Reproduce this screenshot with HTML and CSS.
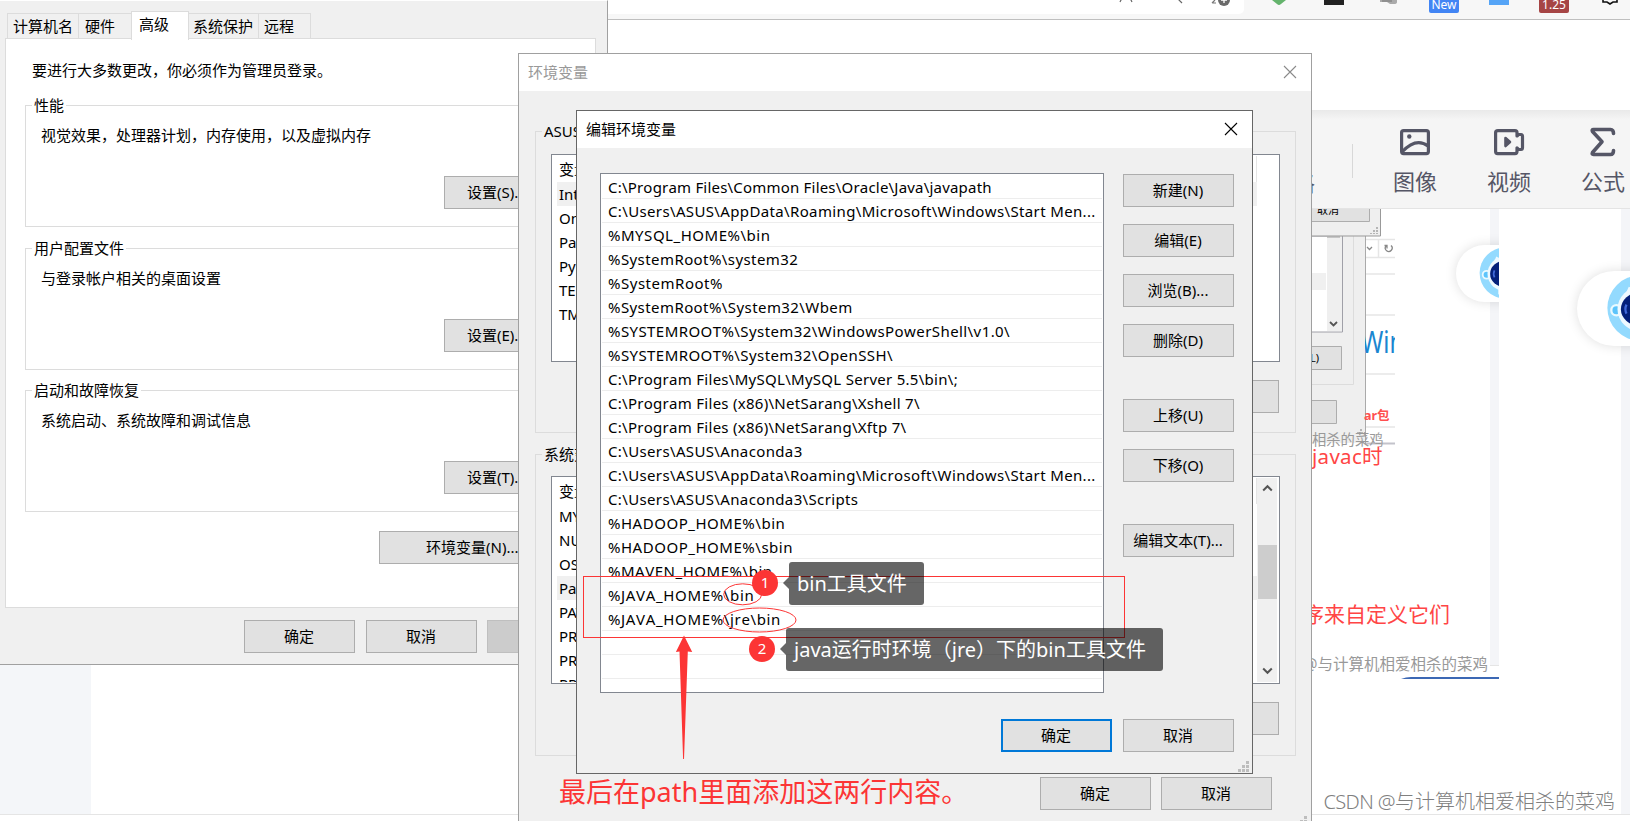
FILE: index.html
```
<!DOCTYPE html>
<html lang="zh-CN">
<head>
    <meta charset="UTF-8">
    <title>环境变量</title>
    <link rel="stylesheet" href="styles.css">
</head>
<body>
    <div class="desktop">

        <!-- Browser behind the dialogs -->
        <div class="browser">
            <div class="browser-bar">
                <div class="address"></div>
                <svg class="bar-icons" width="540" height="19" viewBox="1090 0 540 19">
                    <path d="M1120 2l2-4M1132 2l-2-4M1178-1l4 4" fill="none" stroke="#666" stroke-width="1.2"/>
                    <path d="M1212 3l3-3M1212 3h4" fill="none" stroke="#777" stroke-width="1.2"/>
                    <circle cx="1224" cy="0" r="6" fill="#6a6a6a"/>
                    <path d="M1221 0h6M1224-2v5" stroke="#fff" stroke-width="1.3"/>
                    <path d="M1272 0h14l-5 4q-2 2-4 0z" fill="#64b36c"/>
                    <rect x="1324" y="0" width="20" height="5" fill="#222"/>
                    <path d="M1380 0h17v2q0 2-3 2h-4l-3-2h-7z" fill="#aaa"/>
                    <path d="M1382 1h10" stroke="#777"/>
                    <rect x="1489" y="0" width="20" height="5" fill="#55a4f6"/>
                    <path d="M1603 0v2h4l3 2 3-2h4v-3" fill="none" stroke="#111" stroke-width="1.6"/>
                </svg>
                <span class="badge badge-new">New</span>
                <span class="badge badge-rate">1.25</span>
            </div>
            <div class="page-head"></div>
            <div class="editor-bar">
                <span class="cut-label">格</span>
                <i class="bar-divider"></i>
                <div class="tool tool-image">
                    <svg width="32" height="32" viewBox="0 0 32 32" fill="none" stroke="#555666" stroke-width="3.2" stroke-linejoin="round">
                        <rect x="2.6" y="4.6" width="26.8" height="23" rx="2"/>
                        <circle cx="10.3" cy="10.5" r="2.2" fill="#555666" stroke="none"/>
                        <path d="M3 26Q17 11 29 20"/>
                    </svg>
                    <span>图像</span>
                </div>
                <div class="tool tool-video">
                    <svg width="32" height="32" viewBox="0 0 32 32" fill="none" stroke="#555666" stroke-width="3.2" stroke-linejoin="round">
                        <path d="M5 4.6h17q2 0 2 2V10l1.500-1.500h2.500q1.500 0 1.500 2v11q0 2-1.500 2h-2.500L24 22v3.600q0 2-2 2H4.600q-2 0-2-2v-19q0-2 2.400-2z"/>
                        <path d="M12.500 12l4.500 4-4.500 4z" fill="#555666" stroke-width="2.600"/>
                    </svg>
                    <span>视频</span>
                </div>
                <div class="tool tool-formula">
                    <svg width="32" height="32" viewBox="0 0 32 32" fill="none" stroke="#555666" stroke-width="3.6" stroke-linejoin="round" stroke-linecap="round">
                        <path d="M26.500 7.500q0-4-3-4H6.500q-2 0-1 2L15 15.800 5.500 26.500q-1 2 1 2h17q3 0 3-4"/>
                    </svg>
                    <span>公式</span>
                </div>
            </div>
            <div class="page-body">
                <div class="page-margin"></div>
                <div class="article"></div>
                <div class="page-gutter"></div>
            </div>

            <!-- Pictures already inserted in the article -->
            <div class="shot">
                <i class="shot-strip"></i>
                <svg class="shot-art" width="188" height="472" viewBox="1311 208 188 472">
                    <path d="M1366 239.500h29M1366 257.500h29M1366 274h29M1366 315h29M1366 374h29M1366 427h29M1378.500 240v17" fill="none" stroke="#e6e6e6" stroke-width="1.500"/>
                    <path d="M1366 443.500h29" stroke="#c3c3cb" stroke-width="2"/>
                    <path d="M1367 247l2.500 2.500 2.500-2.500" fill="none" stroke="#888" stroke-width="1.300"/>
                    <path d="M1386 246a3.400 3.400 0 1 0 5-.500M1384.500 245.500h2.500v3" fill="none" stroke="#888" stroke-width="1.300"/>
                    <rect x="1311" y="208" width="54.500" height="235" fill="#efefef"/>
                    <path d="M1365.500 236v208" stroke="#aaa"/>
                    <path d="M1353.500 236v148.500H1311" fill="none" stroke="#dcdcdc"/>
                    <path d="M1311 236h31.500v96H1311" fill="#fff" stroke="#a0a0a8"/>
                    <rect x="1327" y="236" width="15" height="95" fill="#efefef"/>
                    <rect x="1327" y="236" width="13" height="2" fill="#c6c6c6"/>
                    <rect x="1311" y="273" width="15" height="17" fill="#f0f0f0"/>
                    <path d="M1330 322l3.500 3.500 3.500-3.500" fill="none" stroke="#555" stroke-width="1.800"/>
                    <path d="M1300 346.500h41.500v23H1300zM1300 400.500h36.500v23H1300z" fill="#e1e1e1" stroke="#adadad"/>
                    <path d="M1300 208h80.500v28H1300z" fill="#efefef" stroke="#999"/>
                    <path d="M1300 206h69.500v15.500H1300z" fill="#e1e1e1" stroke="#adadad"/>
                    <path d="M1376 227h2v2h-2zM1373 230h2v2h-2zM1376 230h2v2h-2zM1370 233h2v1h-2zM1373 233h2v1h-2zM1376 233h2v1h-2zM1360 429h2v2h-2zM1357 432h6v2h-6z" fill="#b5b5b5"/>
                    <path d="M1490 665.500h9" stroke="#e5e5e5"/>
                    <path d="M1401 679q5-2 10-2h88v2z" fill="#3c68b4"/>
                </svg>
                <span class="shot-cancel">取消</span>
                <span class="shot-l">L)</span>
                <span class="shot-win"><b>Win</b></span>
                <span class="shot-jar">ar包</span>
                <span class="shot-mark1">相杀的菜鸡</span>
                <span class="shot-javac">javac时</span>
                <span class="shot-custom">序来自定义它们</span>
                <span class="shot-mark2">@与计算机相爱相杀的菜鸡</span>
                <div class="bubble bubble-small">
                    <svg width="56" height="56" viewBox="0 0 64 64"><use href="#robot"/></svg>
                </div>
            </div>
            <div class="bubble bubble-large">
                <svg width="72" height="72" viewBox="0 0 64 64">
                    <g id="robot">
                        <circle cx="32" cy="32" r="29" fill="#93dafe"/>
                        <path d="M24 50l8-4 6 14q-8 0-14-4z" fill="#d8f3ff"/>
                        <circle cx="11" cy="34" r="4.500" fill="#5cc4fb" stroke="#eafaff" stroke-width="2"/>
                        <ellipse cx="33" cy="33" rx="21" ry="20" fill="#eef9ff"/>
                        <path d="M19 20l3-7 7 4z" fill="#eef9ff"/>
                        <ellipse cx="32" cy="33" rx="17" ry="15" fill="#04207a"/>
                        <path d="M20 29q-2 4 0 8" fill="none" stroke="#4169d8" stroke-width="2"/>
                        <path d="M26 34q3-4 6 0" fill="none" stroke="#58b9ff" stroke-width="2"/>
                    </g>
                </svg>
            </div>
        </div>

        <!-- System properties -->
        <div class="window props">
            <div class="tabs">
                <span class="tab tab-name">计算机名</span>
                <span class="tab tab-hw">硬件</span>
                <span class="tab tab-adv active">高级</span>
                <span class="tab tab-protect">系统保护</span>
                <span class="tab tab-remote">远程</span>
            </div>
            <div class="panel">
                <p class="notice">要进行大多数更改，你必须作为管理员登录。</p>
                <div class="group setting">
                    <span class="group-title">性能</span>
                    <p>视觉效果，处理器计划，内存使用，以及虚拟内存</p>
                    <button class="btn">设置(S)...</button>
                </div>
                <div class="group setting">
                    <span class="group-title">用户配置文件</span>
                    <p>与登录帐户相关的桌面设置</p>
                    <button class="btn">设置(E)...</button>
                </div>
                <div class="group setting">
                    <span class="group-title">启动和故障恢复</span>
                    <p>系统启动、系统故障和调试信息</p>
                    <button class="btn">设置(T)...</button>
                </div>
                <button class="btn env-btn">环境变量(N)...</button>
            </div>
            <div class="props-actions">
                <button class="btn">确定</button>
                <button class="btn">取消</button>
                <button class="btn disabled">应用(A)</button>
            </div>
        </div>

        <!-- Environment variables -->
        <div class="window env">
            <div class="title-bar">
                <span>环境变量</span>
                <svg width="14" height="14" viewBox="0 0 14 14"><path d="M1 1l12 12M13 1L1 13" stroke="#8a8a8a" stroke-width="1.1"/></svg>
            </div>
            <div class="group vars vars-user">
                <span class="group-title">ASUS 的用户变量(U)</span>
                <div class="var-list">
                    <div class="rows">
                        <div class="head">变量</div>
                        <div class="selected">IntelliJ IDEA</div>
                        <div>OneDrive</div>
                        <div>Path</div>
                        <div>PyCharm</div>
                        <div>TEMP</div>
                        <div>TMP</div>
                    </div>
                </div>
                <button class="btn"></button>
            </div>
            <div class="group vars vars-system">
                <span class="group-title">系统变量(S)</span>
                <div class="var-list">
                    <div class="rows">
                        <div class="head">变量</div>
                        <div>MYSQL_HOME</div>
                        <div>NUMBER</div>
                        <div>OS</div>
                        <div class="selected">Path</div>
                        <div>PATHEXT</div>
                        <div>PROCESSOR</div>
                        <div>PROCESSOR</div>
                        <div>PROCESSOR</div>
                    </div>
                    <div class="scrollbar">
                        <svg width="11" height="8" viewBox="0 0 11 8"><path d="M1.200 6.500l4.300-4.300 4.300 4.300" fill="none" stroke="#555" stroke-width="2"/></svg>
                        <i class="thumb"></i>
                        <svg width="11" height="8" viewBox="0 0 11 8"><path d="M1.200 1.500l4.300 4.300 4.300-4.300" fill="none" stroke="#555" stroke-width="2"/></svg>
                    </div>
                </div>
                <button class="btn"></button>
            </div>
            <div class="env-actions">
                <button class="btn">确定</button>
                <button class="btn">取消</button>
            </div>
            <svg class="grip" width="12" height="12"><path d="M9 1h3v3H9zM9 5h3v3H9zM5 5h3v3H5zM9 9h3v3H9zM5 9h3v3H5zM1 9h3v3H1z" fill="#bdbdbd"/></svg>
        </div>

        <!-- Edit environment variable -->
        <div class="window edit">
            <div class="title-bar">
                <span>编辑环境变量</span>
                <svg width="14" height="14" viewBox="0 0 14 14"><path d="M1 1l12 12M13 1L1 13" stroke="#000" stroke-width="1.1"/></svg>
            </div>
            <div class="edit-body">
                <ul class="paths">
                    <li>C:\Program Files\Common Files\Oracle\Java\javapath</li>
                    <li class="long">C:\Users\ASUS\AppData\Roaming\Microsoft\Windows\Start Men...</li>
                    <li class="home">%MYSQL_HOME%\bin</li>
                    <li class="root">%SystemRoot%\system32</li>
                    <li class="home">%SystemRoot%</li>
                    <li class="root">%SystemRoot%\System32\Wbem</li>
                    <li class="root">%SYSTEMROOT%\System32\WindowsPowerShell\v1.0\</li>
                    <li class="root">%SYSTEMROOT%\System32\OpenSSH\</li>
                    <li>C:\Program Files\MySQL\MySQL Server 5.5\bin\;</li>
                    <li>C:\Program Files (x86)\NetSarang\Xshell 7\</li>
                    <li>C:\Program Files (x86)\NetSarang\Xftp 7\</li>
                    <li class="long">C:\Users\ASUS\Anaconda3</li>
                    <li class="long">C:\Users\ASUS\AppData\Roaming\Microsoft\Windows\Start Men...</li>
                    <li class="long">C:\Users\ASUS\Anaconda3\Scripts</li>
                    <li class="home">%HADOOP_HOME%\bin</li>
                    <li class="home">%HADOOP_HOME%\sbin</li>
                    <li class="home">%MAVEN_HOME%\bin</li>
                    <li class="java">%JAVA_HOME%\bin</li>
                    <li class="java">%JAVA_HOME%\jre\bin</li>
                    <li></li>
                    <li></li>
                </ul>
                <div class="side-buttons">
                    <button class="btn">新建(N)</button>
                    <button class="btn">编辑(E)</button>
                    <button class="btn">浏览(B)...</button>
                    <button class="btn">删除(D)</button>
                    <button class="btn spaced">上移(U)</button>
                    <button class="btn">下移(O)</button>
                    <button class="btn spaced">编辑文本(T)...</button>
                </div>
            </div>
            <div class="edit-actions">
                <button class="btn primary">确定</button>
                <button class="btn">取消</button>
            </div>
            <svg class="grip" width="12" height="12"><path d="M9 1h3v3H9zM9 5h3v3H9zM5 5h3v3H5zM9 9h3v3H9zM5 9h3v3H5zM1 9h3v3H1z" fill="#bdbdbd"/></svg>
        </div>

        <!-- Red marks and notes -->
        <svg class="marks" width="1630" height="821" fill="none" stroke="#fc3535">
            <rect x="583.500" y="576.500" width="541" height="61"/>
            <ellipse cx="742.700" cy="594.300" rx="19" ry="10.500"/>
            <ellipse cx="759.500" cy="620" rx="36.500" ry="12"/>
            <path d="M684 635.500l8.200 16.500-4.400-.5-3.800 107.500-.9 0-3.600-107.500-3.600.5z" fill="#fc3535" stroke="none"/>
        </svg>
        <span class="number number-1">1</span>
        <span class="number number-2">2</span>
        <div class="note note-1">bin工具文件</div>
        <div class="note note-2">java运行时环境（jre）下的bin工具文件</div>
        <div class="caption">最后在path里面添加这两行内容。</div>
        <div class="watermark"><span>CSDN @</span>与计算机相爱相杀的菜鸡</div>
    </div>
</body>
</html>
```

FILE: styles.css
```
:root {
    --face: #f0f0f0;
    --btn: #e1e1e1;
    --btn-border: #adadad;
    --group-border: #dcdcdc;
    --list-border: #828790;
    --red: #fc3535;
}

* {
    margin: 0;
    padding: 0;
    box-sizing: border-box;
}

body {
    font-family: "Noto Sans", "Noto Sans CJK SC", sans-serif;
    font-size: 15px;
    line-height: 20px;
    color: #000;
    background: #fff;
    overflow: hidden;
}

.desktop {
    position: relative;
    width: 1630px;
    height: 821px;
    overflow: hidden;
}

span,
.btn,
.note,
.caption,
.watermark {
    white-space: nowrap;
}

/* Browser */
.browser {
    position: absolute;
    inset: 0;
    display: flex;
    flex-direction: column;
}

.browser-bar {
    position: relative;
    height: 20px;
    background: #f7f7f7;
    border-bottom: 1px solid #bfbfbf;
}

.address {
    width: 1244px;
    height: 14px;
    background: #fff;
    border-radius: 0 0 5px 0;
}

.bar-icons {
    position: absolute;
    right: 0;
    top: 0;
}

.badge {
    position: absolute;
    top: -4px;
    width: 30px;
    height: 17px;
    border-radius: 2px;
    color: #fff;
    font-size: 12px;
    line-height: 18px;
    text-align: center;
}

.badge-new {
    left: 1429px;
    background: #4285f4;
}

.badge-rate {
    left: 1539px;
    background: #a64545;
}

.page-head {
    height: 90px;
}

.editor-bar {
    position: relative;
    display: flex;
    height: 99px;
    padding-left: 1301px;
    background: linear-gradient(#e9e9e9, #f5f5f5 10px);
    border-bottom: 1px solid #e4e4e4;
    color: #555666;
    font-size: 22px;
    line-height: 30px;
}

.cut-label {
    display: flex;
    justify-content: flex-end;
    width: 14px;
    margin-top: 57px;
}

.bar-divider {
    width: 1px;
    height: 34px;
    margin: 34px 0 0 37px;
    background: #d8d8d8;
}

.tool {
    display: flex;
    flex-direction: column;
    align-items: center;
    width: 44px;
    padding-top: 16px;
}

.tool span {
    margin-top: 8px;
}

.tool-image {
    margin-left: 40px;
}

.tool-video {
    margin-left: 50px;
}

.tool-formula {
    margin-left: 50px;
}

.page-body {
    display: flex;
    height: 606px;
    border-bottom: 1px solid #e5e5e5;
}

.page-margin {
    width: 91px;
    background: #f4f6f9;
}

.article {
    flex: 1;
}

.page-gutter {
    width: 9px;
    background: #f4f5f8;
}

.shot {
    position: absolute;
    left: 1311px;
    top: 209px;
    width: 188px;
    height: 471px;
    overflow: hidden;
}

.shot > * {
    position: absolute;
}

.shot-art {
    left: 0;
    top: -1px;
}

.shot-strip {
    right: 0;
    top: 0;
    width: 9px;
    height: 456px;
    background: #f4f5f8;
}

.shot-cancel {
    left: 6px;
    top: -9px;
    font-size: 11px;
}

.shot-l {
    left: -1px;
    top: 139px;
    font-size: 11px;
}

.shot-win {
    left: 54px;
    top: 113px;
    width: 30px;
    height: 40px;
    overflow: hidden;
    color: #1a86d0;
    font-size: 30px;
    line-height: 40px;
}

/* the W starts under the window edge */
.shot-win b {
    display: block;
    width: 60px;
    margin-left: -4px;
    font-weight: normal;
    transform: scaleX(0.8);
    transform-origin: 0 50%;
}

.shot-jar {
    left: 53px;
    top: 197px;
    color: #ff5050;
    font-size: 12.5px;
    font-weight: bold;
}

.shot-mark1 {
    left: 1px;
    top: 221px;
    color: #999;
    font-size: 14.3px;
}

.shot-javac {
    left: 1px;
    top: 237px;
    color: #ff4545;
    font-size: 20.5px;
    letter-spacing: 0.3px;
}

.shot-custom {
    left: -8px;
    top: 395px;
    color: #ff4545;
    font-size: 21px;
}

.shot-mark2 {
    right: 11px;
    top: 445px;
    color: #999;
    font-size: 15.5px;
}

.bubble {
    position: absolute;
    background: #fff;
    box-shadow: 0 0 12px rgba(0, 0, 0, 0.13);
}

.bubble-small {
    left: 145px;
    top: 36px;
    width: 100px;
    height: 57px;
    padding-left: 21px;
    border-radius: 29px;
}

.bubble-large {
    left: 1577px;
    top: 271px;
    width: 120px;
    height: 75px;
    padding: 1px 0 0 27px;
    border-radius: 38px;
}

/* Shared dialog parts */
.window {
    position: absolute;
    background: var(--face);
}

.btn {
    display: block;
    width: 111px;
    height: 33px;
    padding-right: 1px;
    border: 1px solid var(--btn-border);
    background: var(--btn);
    font: inherit;
    line-height: 31px;
    text-align: center;
    color: #000;
}

.group {
    border: 1px solid var(--group-border);
}

.group-title {
    display: table;
    height: 20px;
    margin: -10px 0 0 6px;
    padding: 0 2px;
    line-height: 18px;
}

.title-bar {
    display: flex;
    align-items: center;
    justify-content: space-between;
    height: 37px;
    background: #fff;
}

.grip {
    position: absolute;
}

/* System properties */
.props {
    left: 0;
    top: 0;
    width: 608px;
    height: 665px;
    border-top: 1px solid #fff;
    border-right: 1px solid #a0a0a0;
    border-bottom: 1px solid #a0a0a0;
}

.tabs {
    display: flex;
    align-items: flex-end;
    height: 38px;
    padding: 0 0 0 7px;
}

.tab {
    height: 26px;
    padding-left: 5px;
    border: 1px solid var(--group-border);
    border-bottom: 0;
    line-height: 25px;
}

.tab-name {
    width: 72px;
}

.tab-hw {
    width: 54px;
    margin-left: -1px;
    padding-left: 6px;
}

.tab-adv {
    width: 58px;
    margin-left: -1px;
    padding-left: 7px;
}

.tab-protect {
    width: 71px;
    margin-left: -1px;
    padding-left: 4px;
}

.tab-remote {
    width: 53px;
    margin-left: -1px;
}

.tab.active {
    position: relative;
    height: 29px;
    margin-bottom: -1px;
    background: #fff;
    line-height: 24px;
}

.panel {
    width: 591px;
    height: 570px;
    margin: -1px 0 0 5px;
    padding: 22px 0 0 19px;
    border: 1px solid var(--group-border);
    background: #fff;
}

.panel p {
    height: 20px;
    line-height: 18px;
}

.notice {
    padding-left: 7px;
}

.setting {
    width: 550px;
    height: 122px;
    margin-top: 20px;
}

.notice + .setting {
    margin: 24px 0 21px;
}

.setting .group-title {
    background: #fff;
}

.setting p {
    margin: 10px 0 0 15px;
}

.setting .btn {
    width: 113px;
    margin: 30px 0 0 418px;
    padding-left: 22px;
    text-align: left;
}

.env-btn {
    width: 178px;
    margin: 19px 0 0 354px;
    padding-left: 46px;
    text-align: left;
}

.props-actions {
    display: flex;
    gap: 11px;
    margin: 12px 0 0 244px;
}

.props-actions .disabled {
    margin-left: -1px;
    background: #ccc;
    border-color: #bfbfbf;
    color: #888;
}

/* Environment variables */
.env {
    left: 518px;
    top: 53px;
    width: 794px;
    height: 780px;
    border: 1px solid #a0a0a0;
}

.env .title-bar {
    padding: 0 14px 2px 9px;
    color: #999;
}

.vars {
    position: relative;
    width: 761px;
    margin-left: 16px;
}

.vars-user {
    height: 302px;
    margin-top: 40px;
}

.vars-system {
    height: 302px;
    margin-top: 21px;
}

.vars .group-title {
    background: var(--face);
}

.var-list {
    display: flex;
    justify-content: space-between;
    width: 729px;
    height: 208px;
    margin: 12px 0 0 15px;
    padding: 1px 2px 1px 5px;
    border: 1px solid var(--list-border);
    background: #fff;
    overflow: hidden;
}

.vars-system .var-list {
    margin-top: 11px;
}

.rows {
    width: 700px;
    overflow: hidden;
}

.rows div {
    height: 24px;
    padding-left: 2px;
    line-height: 25px;
}

.rows .head {
    height: 26px;
    border-right: 1px solid #e5e5e5;
    line-height: 26px;
}

.rows .selected {
    background: #f0f0f0;
}

.scrollbar {
    display: flex;
    flex-direction: column;
    align-items: center;
    justify-content: space-between;
    width: 20px;
    padding: 6px 0 7px;
    background: #f0f0f0;
}

.thumb {
    width: 19px;
    height: 54px;
    margin-top: -16px;
    background: #cdcdcd;
}

.vars .btn {
    margin: 18px 0 0 632px;
}

.env-actions {
    display: flex;
    gap: 10px;
    margin: 21px 0 0 521px;
}

.env .grip {
    right: 4px;
    top: 761px;
}

/* Edit environment variable */
.edit {
    left: 576px;
    top: 110px;
    width: 677px;
    height: 664px;
    border: 1px solid #666;
}

.edit .title-bar {
    padding: 0 14px 1px 9px;
}

.edit-body {
    display: flex;
    padding: 25px 0 0 23px;
}

.paths {
    width: 504px;
    height: 520px;
    padding: 0 1px;
    border: 1px solid var(--list-border);
    background: #fff;
    list-style: none;
}

.paths li {
    height: 24px;
    padding-left: 6px;
    border-bottom: 1px solid #ededed;
    line-height: 24px;
    font-kerning: none;
    letter-spacing: 0.28px;
    white-space: nowrap;
}

.paths li:first-child {
    height: 25px;
    line-height: 26px;
    letter-spacing: 0.2px;
}

.paths .long {
    letter-spacing: 0.36px;
}

.paths .root {
    letter-spacing: 0.42px;
}

.paths .home {
    letter-spacing: 0.52px;
}

.paths .java {
    letter-spacing: 0.65px;
}

.side-buttons {
    display: flex;
    flex-direction: column;
    gap: 17px;
    margin: 1px 0 0 19px;
}

.side-buttons .spaced {
    margin-top: 25px;
}

.edit-actions {
    display: flex;
    gap: 11px;
    margin: 26px 0 0 424px;
}

.btn.primary {
    border: 2px solid #0078d7;
    line-height: 29px;
}

.edit .grip {
    right: 3px;
    bottom: 1px;
}

/* Red marks */
.marks {
    position: absolute;
    left: 0;
    top: 0;
}

.number {
    position: absolute;
    width: 26px;
    height: 26px;
    border-radius: 50%;
    background: var(--red);
    color: #fff;
    line-height: 25px;
    text-align: center;
}

.number-1 {
    left: 752px;
    top: 570px;
}

.number-2 {
    left: 749px;
    top: 636px;
}

.note {
    position: absolute;
    height: 43px;
    padding-left: 8px;
    border-radius: 3px;
    background: rgba(0, 0, 0, 0.6);
    color: #fff;
    font-size: 20px;
    line-height: 43px;
}

.note::before {
    content: "";
    position: absolute;
    left: -6px;
    top: 15px;
    border: 6px solid transparent;
    border-left: 0;
    border-right-color: rgba(0, 0, 0, 0.6);
}

.note-1 {
    left: 789px;
    top: 562px;
    width: 135px;
}

.note-2 {
    left: 786px;
    top: 628px;
    width: 377px;
}

.caption {
    position: absolute;
    left: 559px;
    top: 772px;
    color: var(--red);
    font-size: 27px;
    line-height: 40px;
}

.watermark {
    position: absolute;
    right: 15px;
    top: 787px;
    color: #808080;
    font-size: 20px;
    font-weight: 300;
    line-height: 30px;
}

.watermark span {
    letter-spacing: -0.6px;
}
```
